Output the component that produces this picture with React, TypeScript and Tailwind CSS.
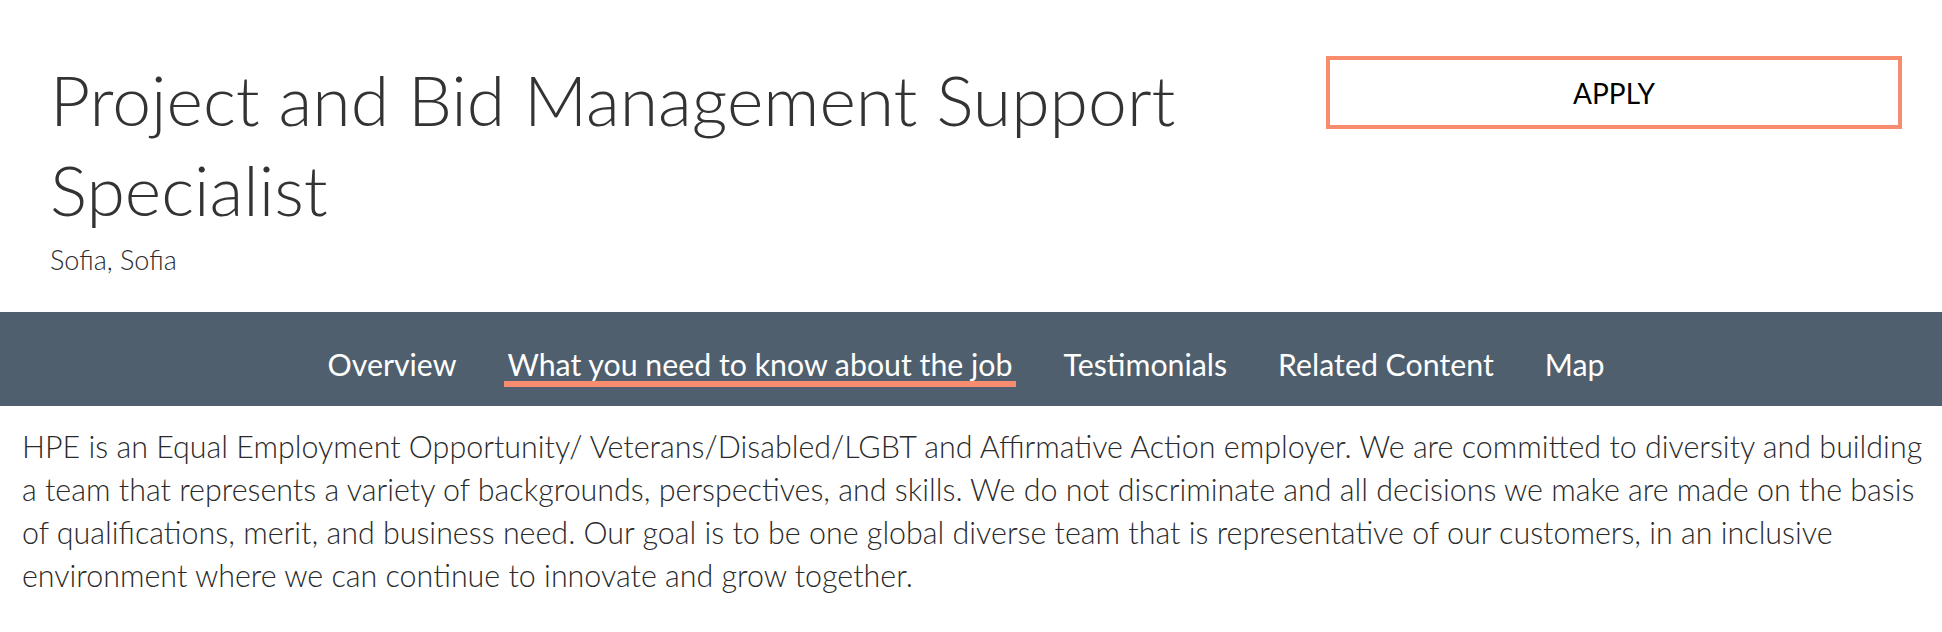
import React from "react";

export default function App() {
  const items = [
    "Overview",
    "What you need to know about the job",
    "Testimonials",
    "Related Content",
    "Map",
  ];
  const lines = [
    "HPE is an Equal Employment Opportunity/ Veterans/Disabled/LGBT and Affirmative Action employer. We are committed to diversity and building",
    "a team that represents a variety of backgrounds, perspectives, and skills. We do not discriminate and all decisions we make are made on the basis",
    "of qualifications, merit, and business need. Our goal is to be one global diverse team that is representative of our customers, in an inclusive",
    "environment where we can continue to innovate and grow together.",
  ];
  return (
    <div className="w-[1942px] bg-white text-[#2f2f2f] font-['Lato',sans-serif]">
      <header className="flex items-start pl-[50px] pr-[40px] pt-[54px] pb-[34px]">
        <div className="flex-1 min-w-0 pr-[60px]">
          <h1 className="text-[69.7px] leading-[90px] font-light text-[#333333]">
            Project and Bid Management Support Specialist
          </h1>
          <div className="mt-[8px] text-[27px] leading-[36px] font-light text-[#2a2a2a]">Sofia, Sofia</div>
        </div>
        <button className="mt-[2px] shrink-0 w-[576px] h-[73px] border-[4px] border-[#f88c6f] bg-white text-black text-[28px] flex items-center justify-center">
          APPLY
        </button>
      </header>
      <nav className="h-[94px] bg-[#4f5f6d] flex justify-center items-start gap-[51px] pt-[35px] pr-[10px]">
        {items.map((it, i) => (
          <span
            key={it}
            className={
              "text-white text-[30.3px] leading-[34px] border-b-[6px] px-[3px] -mx-[3px] " +
              (i === 1 ? "border-[#f88c6f]" : "border-transparent")
            }
          >
            {it}
          </span>
        ))}
      </nav>
      <div className="pl-[22px] pt-[19px] text-[30.45px] leading-[43px] font-light text-[#2a2a2a]">
        {lines.map((l) => (
          <span key={l} className="block whitespace-nowrap">
            {l}
          </span>
        ))}
      </div>
    </div>
  );
}
